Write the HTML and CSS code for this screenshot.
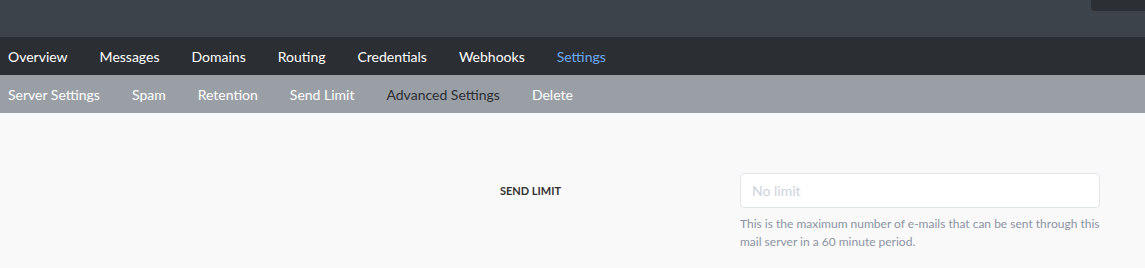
FILE: index.html
```html
<!DOCTYPE html>
<html lang="en">
<head>
    <meta charset="UTF-8">
    <meta name="viewport" content="width=device-width, initial-scale=1">
    <title>Send Limit</title>
    <link rel="stylesheet" href="styles.css">
</head>
<body>
    <div class="header">
        <div class="header-tab"></div>
    </div>

    <nav class="nav">
        <a href="#">Overview</a>
        <a href="#">Messages</a>
        <a href="#">Domains</a>
        <a href="#">Routing</a>
        <a href="#">Credentials</a>
        <a href="#">Webhooks</a>
        <a href="#" class="active">Settings</a>
    </nav>

    <nav class="subnav">
        <a href="#">Server Settings</a>
        <a href="#">Spam</a>
        <a href="#">Retention</a>
        <a href="#">Send Limit</a>
        <a href="#" class="active">Advanced Settings</a>
        <a href="#">Delete</a>
    </nav>

    <div class="content">
        <div class="field">
            <label class="field-label" for="send-limit">Send Limit</label>
            <div class="field-input">
                <input type="text" id="send-limit" placeholder="No limit">
                <p class="help">This is the maximum number of e-mails that can be sent through this mail server in a 60 minute period.</p>
            </div>
        </div>
    </div>
</body>
</html>
```

FILE: styles.css
```css
* {
    box-sizing: border-box;
    margin: 0;
    padding: 0;
}

body {
    font-family: 'Lato', 'Liberation Sans', sans-serif;
    background: #f9f9f9;
    color: #333;
}

.header {
    height: 37px;
    background: #3c434b;
    display: flex;
    justify-content: flex-end;
}

.header-tab {
    width: 54px;
    height: 11px;
    background: #2c3035;
    border-bottom-left-radius: 4px;
}

.nav,
.subnav {
    display: flex;
    align-items: center;
    gap: 32px;
    height: 38px;
    padding: 0 8px;
}

.nav {
    background: #2b2e33;
}

.subnav {
    background: #9a9fa6;
}

.nav a,
.subnav a {
    font-size: 14px;
    text-decoration: none;
    color: #fff;
}

.nav a.active {
    color: #6ea9f4;
}

.subnav a.active {
    color: #2b2e33;
}

.content {
    padding-top: 60px;
}

.field {
    display: flex;
    align-items: flex-start;
}

.field-label {
    width: 740px;
    padding-left: 500px;
    padding-top: 11px;
    font-size: 11px;
    font-weight: bold;
    text-transform: uppercase;
    color: #333;
}

.field-input {
    width: 360px;
}

.field-input input {
    width: 100%;
    height: 35px;
    padding: 0 11px;
    border: 1px solid #e1e5ec;
    border-radius: 4px;
    background: #fff;
    font-family: inherit;
    font-size: 14px;
    color: #333;
}

.field-input input::placeholder {
    color: #cdd3dc;
}

.help {
    margin-top: 7px;
    font-size: 12px;
    line-height: 18px;
    color: #8c94a3;
}
```
